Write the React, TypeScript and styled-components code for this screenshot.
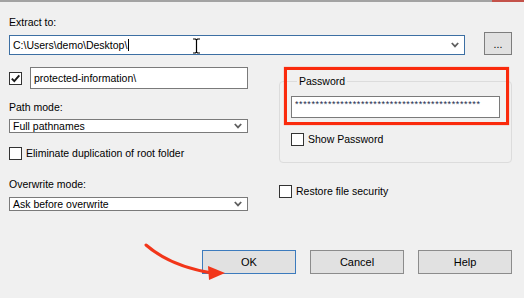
import styled, { createGlobalStyle } from "styled-components";

const GlobalStyle = createGlobalStyle`
    body {
        margin: 0;
        background: #f0f0f0;
    }
`

const Window = styled.div`
    width: 524px;
    height: 298px;
    background: #f0f0f0;
    position: relative;
    overflow: hidden;
    font-family: "Liberation Sans", Arial, sans-serif;
    font-size: 10.5px;
    color: #000;
`

const TopEdge = styled.div`
    display: flex;
    height: 2px;
`

const EdgeGray = styled.div`
    flex: 1;
    background: #a3a3a3;
`

const EdgeRed = styled.div`
    width: 32px;
    background: #c4524a;
`

const Body = styled.div`
    padding: 0 12px 0 9px;
`

const Label = styled.div<{ $top: number }>`
    display: block;
    line-height: 13px;
    height: 13px;
    margin-top: ${p => p.$top}px;
    white-space: nowrap;
`

const ExtractRow = styled.div`
    display: flex;
    align-items: flex-end;
    gap: 19px;
    margin-top: 3px;
    position: relative;
`

const Combo = styled.div<{ $focused?: boolean; $top?: number }>`
    box-sizing: border-box;
    height: ${p => p.$focused ? 20 : 21}px;
    margin-top: ${p => p.$top ?? 0}px;
    flex: 1;
    display: flex;
    align-items: center;
    justify-content: space-between;
    padding: 0 5px 0 3px;
    background: #fff;
    border: 1px solid ${p => p.$focused ? '#3c6fa3' : '#7a7a7a'};
    white-space: nowrap;
`

const Caret = styled.span`
    display: inline-block;
    width: 1px;
    height: 12px;
    background: #000;
    margin-left: 1px;
    vertical-align: -2px;
`

const IBeam = styled.svg`
    position: absolute;
    left: 183px;
    top: 6px;
`

const BrowseButton = styled.button`
    box-sizing: border-box;
    width: 28px;
    height: 23px;
    padding: 0;
    background: #e1e1e1;
    border: 1px solid #7d7d7d;
    font-family: inherit;
    font-size: 10.5px;
    color: #000;
`

const Columns = styled.div`
    display: grid;
    grid-template-columns: 239px 233px;
    column-gap: 31px;
    align-items: start;
    margin-top: 12px;
`

const Column = styled.div`
    display: flex;
    flex-direction: column;
`

const CheckRow = styled.div<{ $top?: number }>`
    display: flex;
    align-items: center;
    gap: 4px;
    margin-top: ${p => p.$top ?? 0}px;
    line-height: 13px;
    white-space: nowrap;
`

const InputRow = styled.div`
    display: flex;
    align-items: center;
    gap: 8px;
`

const Box = styled.span`
    box-sizing: border-box;
    flex: none;
    width: 13px;
    height: 13px;
    background: #fff;
    border: 1px solid #333;
    display: flex;
    align-items: center;
    justify-content: center;
`

const TextBox = styled.div<{ $top?: number }>`
    box-sizing: border-box;
    flex: 1;
    height: 22px;
    margin-top: ${p => p.$top ?? 0}px;
    padding-left: 3px;
    line-height: 20px;
    background: #fff;
    border: 1px solid #7a7a7a;
    white-space: nowrap;
    overflow: hidden;
`

const Stars = styled.span`
    display: inline-block;
    font-size: 9px;
    letter-spacing: 0.62px;
    line-height: 14px;
    vertical-align: top;
    color: #1a2a4a;
`

const GroupWrap = styled.div`
    position: relative;
    padding-top: 8px;
`

const Group = styled.fieldset`
    margin: 0;
    padding: 0 11px 16px 11px;
    border: 1px solid #dcdcdc;
    border-radius: 4px;
    min-inline-size: auto;
`

const Legend = styled.legend`
    margin-left: 6px;
    padding: 0 2px;
    line-height: 13px;
    font-size: 10.5px;
`

const Highlight = styled.div`
    position: absolute;
    left: 5px;
    top: 0;
    width: 225px;
    height: 58px;
    box-sizing: border-box;
    border: 3px solid #fa2a0c;
    box-shadow: 0 0 1px rgba(250, 42, 12, 0.6);
    pointer-events: none;
`

const ButtonRow = styled.div`
    display: flex;
    justify-content: flex-end;
    gap: 14px;
    margin-top: 39px;
`

const Button = styled.button<{ $default?: boolean }>`
    box-sizing: border-box;
    width: 94px;
    height: 24px;
    background: #e1e1e1;
    border: 1px solid ${p => p.$default ? '#3c7bbd' : '#8c8c8c'};
    font-family: inherit;
    font-size: 11px;
    color: #000;
    padding: 0;
`

const Arrow = styled.svg`
    position: absolute;
    left: 140px;
    top: 238px;
    pointer-events: none;
`

const Chevron = () => (
    <svg width="8" height="6" viewBox="0 0 8 6">
        <path d="M0.8 1 L4 4.4 L7.2 1" fill="none" stroke="#5f5f5f" strokeWidth="1.8"/>
    </svg>
)

const CheckBox = ({checked}: { checked?: boolean }) => (
    <Box>
        {checked && (
            <svg width="11" height="11" viewBox="0 0 11 11">
                <path d="M1.8 5.6 L4.3 8.2 L9.3 2.4" fill="none" stroke="#1a1a1a" strokeWidth="1.9"/>
            </svg>
        )}
    </Box>
)

export default function App() {
    const stars = '*'.repeat(45)

    return (
        <>
            <GlobalStyle/>
            <Window>
                <TopEdge>
                    <EdgeGray/>
                    <EdgeRed/>
                </TopEdge>
                <Body>
                    <Label $top={14}>Extract to:</Label>
                    <ExtractRow>
                        <Combo $focused>
                            <span>C:\Users\demo\Desktop\<Caret/></span>
                            <Chevron/>
                        </Combo>
                        <BrowseButton>...</BrowseButton>
                        <IBeam width="9" height="16" viewBox="0 0 9 16">
                            <path d="M1 1 H3.5 L4.5 2 L5.5 1 H8 M4.5 2 V14 M1 15 H3.5 L4.5 14 L5.5 15 H8"
                                  fill="none" stroke="#000" strokeWidth="1.2"/>
                        </IBeam>
                    </ExtractRow>

                    <Columns>
                        <Column>
                            <InputRow>
                                <CheckBox checked/>
                                <TextBox>protected-information\</TextBox>
                            </InputRow>
                            <Label $top={12}>Path mode:</Label>
                            <Combo $top={5}>
                                <span>Full pathnames</span>
                                <Chevron/>
                            </Combo>
                            <CheckRow $top={14}>
                                <CheckBox/>
                                <span>Eliminate duplication of root folder</span>
                            </CheckRow>
                            <Label $top={18}>Overwrite mode:</Label>
                            <Combo $top={6}>
                                <span>Ask before overwrite</span>
                                <Chevron/>
                            </Combo>
                        </Column>

                        <Column>
                            <GroupWrap>
                                <Group>
                                    <Legend>Password</Legend>
                                    <TextBox $top={8}>
                                        <Stars>{stars}</Stars>
                                    </TextBox>
                                    <CheckRow $top={15}>
                                        <CheckBox/>
                                        <span>Show Password</span>
                                    </CheckRow>
                                </Group>
                                <Highlight/>
                            </GroupWrap>
                            <CheckRow $top={22}>
                                <CheckBox/>
                                <span>Restore file security</span>
                            </CheckRow>
                        </Column>
                    </Columns>

                    <ButtonRow>
                        <Button $default>OK</Button>
                        <Button>Cancel</Button>
                        <Button>Help</Button>
                    </ButtonRow>
                </Body>

                <Arrow width="95" height="50" viewBox="0 0 95 50">
                    <path d="M6 7 Q30 28 72 35" fill="none" stroke="#f2361a" strokeWidth="3" strokeLinecap="round"/>
                    <path d="M68 28 L85 35 L69 42 Z" fill="#f2361a"/>
                </Arrow>
            </Window>
        </>
    )
}
